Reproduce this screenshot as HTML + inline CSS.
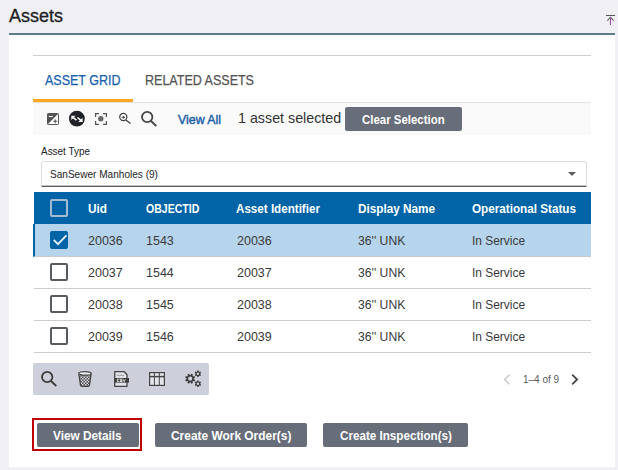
<!DOCTYPE html>
<html><head><meta charset="utf-8">
<style>
*{margin:0;padding:0;box-sizing:border-box}
html,body{width:618px;height:470px;overflow:hidden;background:#f0eff4;font-family:"Liberation Sans",sans-serif;color:#333}
.a{position:absolute;white-space:nowrap;line-height:1;transform-origin:0 0}
.b{position:absolute}
svg{position:absolute;overflow:visible}
#title{left:9px;top:7px;font-size:18px;color:#1e1e1e;-webkit-text-stroke:0.3px #1e1e1e}
#panel{left:9px;top:33px;width:606px;height:434px;background:#fff;border-top:2px solid #5d7b8a}
.hl{position:absolute;height:1px;background:#cfcfcf}
.tab{font-size:14px;top:73px;-webkit-text-stroke:0.25px currentColor}
#tab1{left:45px;color:#1862ab;transform:scaleX(0.893)}
#tab2{left:145px;color:#555;transform:scaleX(0.894)}
#ul{left:33px;top:99px;width:100px;height:3px;background:#fca71f}
#tb{left:33px;top:103px;width:558px;height:32px;background:#fafafa}
#viewall{left:178px;top:113px;font-size:13px;color:#1a60a8;transform:scaleX(0.95);-webkit-text-stroke:0.45px currentColor}
#sel{left:238px;top:111px;font-size:14.5px;color:#333;transform:scaleX(0.985)}
.btn{position:absolute;background:#676d79;color:#fff;border-radius:2px}
.bt{position:absolute;white-space:nowrap;line-height:1;transform-origin:0 0;color:#fff;font-weight:bold;font-size:13px}
#clear{left:345px;top:107px;width:117px;height:24px}
#atlabel{left:41px;top:146px;font-size:10.5px;color:#222;transform:scaleX(0.947)}
#select{left:41px;top:161px;width:546px;height:26px;border:1px solid #dedede;border-bottom:1px solid #5e5e5e;box-shadow:inset 0 -1px 0 #c4c4c4;border-radius:3px 3px 0 0;background:#fff}
#seltext{left:50px;top:169px;font-size:11px;color:#222;transform:scaleX(0.915)}
#caret{left:568px;top:172px;width:0;height:0;border-left:4px solid transparent;border-right:4px solid transparent;border-top:4.5px solid #5c5c5c}
#thead{left:34px;top:192px;width:557px;height:32px;background:#0064a7}
.th{top:202px;font-size:13px;font-weight:bold;color:#fff}
.row{position:absolute;left:34px;width:557px;height:32px;border-bottom:1px solid #cdcdcd;background:#fff}
#r1{left:33px;width:558px;top:224px;height:33px;background:#b6d5ed;border-left:2px solid #0064a7;border-bottom:1px solid #c9c9c9}
.td{font-size:12.5px;color:#3a3a3a}
.cb{position:absolute;left:50px;width:18px;height:18px;border:2px solid #575c61;border-radius:2px;background:#fff}
#ftb{left:33px;top:363px;width:176px;height:32px;background:#cdd0da;border-radius:2px}
#pag{left:523px;top:375px;font-size:10px;color:#5a5a5a}
#redbox{left:32px;top:418px;width:110px;height:33px;border:2px solid #c00000}
</style></head><body>
<div id="title" class="a">Assets</div>
<svg style="left:606px;top:15px" width="10" height="11" viewBox="0 0 10 11"><path d="M0 0.5H9.1" stroke="#555" stroke-width="1"/><path d="M1.3 5.6L4.5 2.4L7.7 5.6" stroke="#666" stroke-width="1.1" fill="none"/><path d="M4.5 10V2.6" stroke="#9a4fa8" stroke-width="1.1"/></svg>

<div id="panel" class="b"></div>
<div class="hl" style="left:33px;top:55px;width:558px"></div>
<div id="tab1" class="a tab">ASSET GRID</div>
<div id="tab2" class="a tab">RELATED ASSETS</div>
<div class="hl" style="left:33px;top:102px;width:558px;background:#e2e2e2"></div>
<div id="ul" class="b"></div>
<div id="tb" class="b"></div>

<!-- toolbar icons -->
<svg style="left:47px;top:113px" width="12" height="12" viewBox="0 0 12 12">
 <rect x="0.5" y="0.5" width="11" height="11" rx="0.8" fill="#fff" stroke="#555" stroke-width="1"/>
 <path d="M0.5 0.5H11.5L0.5 11.5Z" fill="#555"/>
 <path d="M1.7 3.5H5.7" stroke="#fff" stroke-width="1.1"/>
 <path d="M6.3 8.3H10.2M8.2 6.3V10.3" stroke="#555" stroke-width="1.1"/>
</svg>
<svg style="left:69px;top:111px" width="16" height="16" viewBox="0 0 16 16">
 <circle cx="7.9" cy="7.6" r="7.9" fill="#1f2327"/>
 <path d="M2.3 4.7H6.6L2.3 9Z" fill="#fff"/>
 <path d="M13.6 11H9.3L13.6 6.7Z" fill="#fff"/>
 <path d="M3.6 6L7.4 9.2M8.4 6.5L12.3 9.7" stroke="#fff" stroke-width="1.6"/>
</svg>
<svg style="left:95px;top:113px" width="12" height="12" viewBox="0 0 12 12">
 <path d="M0.6 4V0.6H4M8 0.6H11.4V4M11.4 8V11.4H8M4 11.4H0.6V8" stroke="#555" stroke-width="1.2" fill="none"/>
 <circle cx="5.8" cy="5.8" r="2.7" fill="#666"/>
</svg>
<svg style="left:118px;top:112px" width="14" height="14" viewBox="0 0 14 14">
 <circle cx="5.3" cy="5" r="3.6" stroke="#444" stroke-width="1.2" fill="none"/>
 <path d="M7.9 7.9L12.5 11.6" stroke="#444" stroke-width="1.3"/>
 <path d="M3.7 5.3H7M5.4 4V6.6" stroke="#444" stroke-width="1"/>
</svg>
<svg style="left:140px;top:110px" width="18" height="18" viewBox="0 0 18 18">
 <circle cx="7.2" cy="7" r="5.2" stroke="#444" stroke-width="1.8" fill="none"/>
 <path d="M11 11L16.3 16" stroke="#444" stroke-width="1.8"/>
</svg>

<div id="viewall" class="a">View All</div>
<div id="sel" class="a">1 asset selected</div>
<div id="clear" class="btn"></div>
<div class="bt" style="left:362px;top:113px;font-size:13px;transform:scaleX(0.88)">Clear Selection</div>

<div id="atlabel" class="a">Asset Type</div>
<div id="select" class="b"></div>
<div id="seltext" class="a">SanSewer Manholes (9)</div>
<div id="caret" class="b"></div>

<div id="thead" class="b"></div>
<div class="cb" style="top:199px;border:2px solid #a3bcd3;border-radius:2px;background:transparent"></div>
<div class="a th" style="left:88px;transform:scaleX(0.907)">Uid</div>
<div class="a th" style="left:146px;transform:scaleX(0.812)">OBJECTID</div>
<div class="a th" style="left:236px;transform:scaleX(0.894)">Asset Identifier</div>
<div class="a th" style="left:358px;transform:scaleX(0.903)">Display Name</div>
<div class="a th" style="left:472px;transform:scaleX(0.9)">Operational Status</div>

<div id="r1" class="b"></div>
<div class="row" style="top:257px"></div>
<div class="row" style="top:289px"></div>
<div class="row" style="top:321px"></div>

<div class="cb" style="top:231px;background:#0064a7;border-color:#0064a7"></div>
<svg style="left:50px;top:231px" width="18" height="18" viewBox="0 0 18 18"><path d="M3.8 9L8 13.1L16.4 4.3" stroke="#e4eef8" stroke-width="1.9" fill="none"/></svg>
<div class="cb" style="top:263px"></div>
<div class="cb" style="top:295px"></div>
<div class="cb" style="top:327px"></div>

<div class="a td" style="left:88px;top:235px">20036</div><div class="a td" style="left:146px;top:235px">1543</div><div class="a td" style="left:237px;top:235px">20036</div><div class="a td" style="left:358px;top:235px;transform:scaleX(0.975)">36'' UNK</div><div class="a td" style="left:472px;top:235px;transform:scaleX(0.955)">In Service</div>
<div class="a td" style="left:88px;top:267px">20037</div><div class="a td" style="left:146px;top:267px">1544</div><div class="a td" style="left:237px;top:267px">20037</div><div class="a td" style="left:358px;top:267px;transform:scaleX(0.975)">36'' UNK</div><div class="a td" style="left:472px;top:267px;transform:scaleX(0.955)">In Service</div>
<div class="a td" style="left:88px;top:299px">20038</div><div class="a td" style="left:146px;top:299px">1545</div><div class="a td" style="left:237px;top:299px">20038</div><div class="a td" style="left:358px;top:299px;transform:scaleX(0.975)">36'' UNK</div><div class="a td" style="left:472px;top:299px;transform:scaleX(0.955)">In Service</div>
<div class="a td" style="left:88px;top:331px">20039</div><div class="a td" style="left:146px;top:331px">1546</div><div class="a td" style="left:237px;top:331px">20039</div><div class="a td" style="left:358px;top:331px;transform:scaleX(0.975)">36'' UNK</div><div class="a td" style="left:472px;top:331px;transform:scaleX(0.955)">In Service</div>

<div id="ftb" class="b"></div>
<!-- footer icons -->
<svg style="left:40px;top:370px" width="18" height="18" viewBox="0 0 18 18">
 <circle cx="7.2" cy="7" r="5.2" stroke="#3a3a3a" stroke-width="1.8" fill="none"/>
 <path d="M11 11L16.3 16" stroke="#3a3a3a" stroke-width="1.8"/>
</svg>
<svg style="left:78px;top:371px" width="14" height="16" viewBox="0 0 14 16">
 <defs><pattern id="chk" width="3" height="3" patternUnits="userSpaceOnUse" x="1" y="4"><rect width="3" height="3" fill="#4a4a4a"/><rect width="1.5" height="1.5" fill="#dfe0e8"/><rect x="1.5" y="1.5" width="1.5" height="1.5" fill="#dfe0e8"/></pattern></defs>
 <path d="M0.9 3L2.5 14.2Q2.7 15.3 3.8 15.3H10.2Q11.3 15.3 11.5 14.2L13.1 3" stroke="#444" stroke-width="1.3" fill="url(#chk)"/>
 <ellipse cx="7" cy="2.4" rx="6.3" ry="1.8" stroke="#444" stroke-width="1.2" fill="#eceef3"/>
</svg>
<svg style="left:114px;top:371px" width="16" height="16" viewBox="0 0 16 16">
 <path d="M0.7 0.7H10.2L13 3.8V15.3H0.7Z" stroke="#444" stroke-width="1.3" fill="#e2e3ea" stroke-linejoin="round"/>
 <path d="M2.6 4.4Q3.5 3.6 4.4 4.4T6.2 4.4T8 4.4T9.8 4.4" stroke="#8a8a90" stroke-width="0.9" fill="none"/>
 <rect x="0.7" y="7" width="14.3" height="4.6" fill="#3a3a3a"/>
 <path d="M5.3 8.2H3.3V10.5H5.3M8.3 8.2H6.2V9.35H8.1V10.5H6" stroke="#fff" stroke-width="0.8" fill="none"/>
 <path d="M9 8.1L10.2 10.6L11.4 8.1" stroke="#fff" stroke-width="0.8" fill="none"/>
</svg>
<svg style="left:149px;top:372px" width="16" height="14" viewBox="0 0 16 14">
 <rect x="0.6" y="0.6" width="14.8" height="12.8" stroke="#444" stroke-width="1.2" fill="#e4e5ec"/>
 <path d="M0.6 4.6H15.4" stroke="#444" stroke-width="1.5"/>
 <path d="M5.4 0.6V13.4M10.3 0.6V13.4" stroke="#444" stroke-width="1"/>
</svg>
<svg style="left:184px;top:370px" width="18" height="18" viewBox="0 0 18 18">
 <path d="M9.87 9.15L11.18 9.81L10.51 11.43L9.12 10.98L8.48 11.62L8.93 13.01L7.31 13.68L6.65 12.37L5.75 12.37L5.09 13.68L3.47 13.01L3.92 11.62L3.28 10.98L1.89 11.43L1.22 9.81L2.53 9.15L2.53 8.25L1.22 7.59L1.89 5.97L3.28 6.42L3.92 5.78L3.47 4.39L5.09 3.72L5.75 5.03L6.65 5.03L7.31 3.72L8.93 4.39L8.48 5.78L9.12 6.42L10.51 5.97L11.18 7.59L9.87 8.25ZM8.30 8.70A2.1 2.1 0 1 0 4.10 8.70A2.1 2.1 0 1 0 8.30 8.70ZM16.27 4.19L17.06 4.75L16.31 6.06L15.42 5.66L14.75 6.05L14.65 7.01L13.15 7.01L13.05 6.05L12.38 5.66L11.49 6.06L10.74 4.75L11.53 4.19L11.53 3.41L10.74 2.85L11.49 1.54L12.38 1.94L13.05 1.55L13.15 0.59L14.65 0.59L14.75 1.55L15.42 1.94L16.31 1.54L17.06 2.85L16.27 3.41ZM15.10 3.80A1.2 1.2 0 1 0 12.70 3.80A1.2 1.2 0 1 0 15.10 3.80ZM16.27 14.09L17.06 14.65L16.31 15.96L15.42 15.56L14.75 15.95L14.65 16.91L13.15 16.91L13.05 15.95L12.38 15.56L11.49 15.96L10.74 14.65L11.53 14.09L11.53 13.31L10.74 12.75L11.49 11.44L12.38 11.84L13.05 11.45L13.15 10.49L14.65 10.49L14.75 11.45L15.42 11.84L16.31 11.44L17.06 12.75L16.27 13.31ZM15.10 13.70A1.2 1.2 0 1 0 12.70 13.70A1.2 1.2 0 1 0 15.10 13.70Z" fill="#3a3a3a" fill-rule="evenodd"/>
</svg>

<svg style="left:503px;top:374px" width="8" height="11" viewBox="0 0 8 11"><path d="M6.5 0.7L1.6 5.5L6.5 10.3" stroke="#c9c9c9" stroke-width="1.6" fill="none"/></svg>
<div id="pag" class="a">1–4 of 9</div>
<svg style="left:571px;top:374px" width="8" height="11" viewBox="0 0 8 11"><path d="M1.2 0.7L6.1 5.5L1.2 10.3" stroke="#444" stroke-width="1.8" fill="none"/></svg>

<div id="redbox" class="b"></div>
<div class="btn" style="left:37px;top:423px;width:102px;height:24px"></div>
<div class="bt" style="left:53px;top:429px;transform:scaleX(0.907)">View Details</div>
<div class="btn" style="left:155px;top:423px;width:152px;height:24px"></div>
<div class="bt" style="left:171px;top:429px;transform:scaleX(0.917)">Create Work Order(s)</div>
<div class="btn" style="left:323px;top:423px;width:145px;height:24px"></div>
<div class="bt" style="left:340px;top:429px;transform:scaleX(0.896)">Create Inspection(s)</div>
</body></html>
